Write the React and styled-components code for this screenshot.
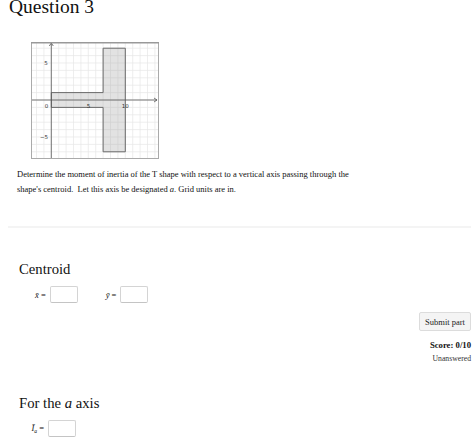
import React from "react";
import styled, { createGlobalStyle } from "styled-components";

const GlobalStyle = createGlobalStyle`
  html, body {
    margin: 0;
    padding: 0;
    background: #fff;
  }
  body {
    font-family: "Liberation Serif", "Times New Roman", serif;
    color: #111;
    overflow: hidden;
  }
`;

//GRAPH SETTINGS
const OX = 20.3;
const OY = 58;
const S = 7.4;
const px = (u) => OX + u * S;
const py = (u) => OY - u * S;

const tShape = [
  [0, 1],
  [7, 1],
  [7, 7],
  [10, 7],
  [10, -7],
  [7, -7],
  [7, -1],
  [0, -1],
];

function Graph() {
  const xs = [];
  for (let k = -2; k <= 14; k++) xs.push(px(k));
  const ys = [];
  for (let k = -7; k <= 7; k++) ys.push(py(k));

  return (
    <svg width="128" height="117" viewBox="0 0 128 117">
      <rect x="0" y="0" width="128" height="117" fill="#fff" />
      {xs.map((x) => (
        <line key={"v" + x} x1={x} y1="0" x2={x} y2="117" stroke="#e6e6e6" strokeWidth="0.7" />
      ))}
      {ys.map((y) => (
        <line key={"h" + y} x1="0" y1={y} x2="128" y2={y} stroke="#e6e6e6" strokeWidth="0.7" />
      ))}
      <polygon
        points={tShape.map(([a, b]) => `${px(a)},${py(b)}`).join(" ")}
        fill="rgba(160,160,160,0.3)"
        stroke="#6a6a6a"
        strokeWidth="1"
      />
      {/* axes */}
      <line x1="0" y1={OY} x2="126" y2={OY} stroke="#555" strokeWidth="0.8" />
      <path d={`M123 ${OY - 2} L126 ${OY} L123 ${OY + 2}`} fill="none" stroke="#555" strokeWidth="0.8" />
      <line x1={OX} y1="117" x2={OX} y2="1" stroke="#555" strokeWidth="0.8" />
      <path d={`M${OX - 2} 4 L${OX} 1 L${OX + 2} 4`} fill="none" stroke="#555" strokeWidth="0.8" />
      {/* tick labels */}
      <g fontFamily="'DejaVu Sans', sans-serif" fontSize="5.5" fill="#333">
        <text x="15" y="23.2" textAnchor="middle">5</text>
        <text x="15.5" y="66" textAnchor="middle">0</text>
        <text x="13" y="96.7" textAnchor="middle">−5</text>
        <text x="57.4" y="66" textAnchor="middle">5</text>
        <text x="94.3" y="66" textAnchor="middle">10</text>
      </g>
      <rect x="0.5" y="0.5" width="127" height="116" fill="none" stroke="#aaa" strokeWidth="1" />
      <line x1="0" y1="0.8" x2="128" y2="0.8" stroke="#999" strokeWidth="1.6" />
    </svg>
  );
}

export default function App() {
  return (
    <>
      <GlobalStyle />
      <Page>
        <Title>Question 3</Title>
        <Figure>
          <Graph />
        </Figure>
        <Prompt>
          Determine the moment of inertia of the T shape with respect to a vertical axis passing through the
          <br />
          shape's centroid.&nbsp; Let this axis be designated <Var>a</Var>. Grid units are in.
        </Prompt>
        <Divider />

        <Part>
          <PartTitle>Centroid</PartTitle>
          <AnswerRow indent={16}>
            <Answer>
              <Label>
                <Var>x̄</Var> =
              </Label>
              <Input />
            </Answer>
            <Answer>
              <Label>
                <Var>ȳ</Var> =
              </Label>
              <Input />
            </Answer>
          </AnswerRow>
          <PartFooter>
            <SubmitButton>Submit part</SubmitButton>
            <Score>Score: 0/10</Score>
            <Status>Unanswered</Status>
          </PartFooter>
        </Part>

        <Part gap={29}>
          <PartTitle>
            For the <Var>a</Var> axis
          </PartTitle>
          <AnswerRow indent={12.5}>
            <Answer>
              <Label>
                <Var>Ī</Var>
                <Sub>
                  <Var>a</Var>
                </Sub>{" "}
                =
              </Label>
              <Input />
            </Answer>
          </AnswerRow>
        </Part>
      </Page>
    </>
  );
}

//STYLED COMPONENTS
const Page = styled.div`
  display: flex;
  flex-direction: column;
  padding: 0 3px 0 8px;
  width: 474px;
  height: 445px;
  box-sizing: border-box;
`;

const Title = styled.h1`
  margin: -2px 0 0 1px;
  font-size: 19.5px;
  line-height: 18px;
  font-weight: normal;
`;

const Figure = styled.div`
  margin: 26px 0 0 23px;
  height: 117px;
  line-height: 0;
`;

const Prompt = styled.p`
  margin: 8px 0 0 9px;
  font-size: 8.5px;
  line-height: 14.5px;
`;

const Var = styled.i`
  font-style: italic;
`;

const Sub = styled.sub`
  font-size: 0.65em;
  vertical-align: -0.3em;
`;

const Divider = styled.div`
  margin-top: 30px;
  height: 2px;
  background: #f4f4f4;
`;

const Part = styled.section`
  display: flex;
  flex-direction: column;
  margin-top: ${(p) => (p.gap ? p.gap : 32)}px;
  padding-left: 11px;
`;

const PartTitle = styled.h2`
  margin: 0;
  font-size: 14.7px;
  line-height: 18px;
  font-weight: normal;
`;

const AnswerRow = styled.div`
  display: flex;
  align-items: center;
  gap: 28px;
  margin-top: 8px;
  padding-left: ${(p) => p.indent}px;
`;

const Answer = styled.div`
  display: flex;
  align-items: center;
  gap: 4px;
`;

const Label = styled.span`
  font-size: 8.5px;
  white-space: nowrap;
`;

const Input = styled.input`
  width: 28px;
  height: 17px;
  box-sizing: border-box;
  border: 1px solid #d4d4d4;
  border-bottom-color: #c4c4c4;
  border-radius: 2px;
  background: #fff;
  padding: 0;
  margin: 0;
`;

const PartFooter = styled.div`
  display: flex;
  flex-direction: column;
  align-items: flex-end;
  margin-top: 9px;
`;

const SubmitButton = styled.button`
  height: 19px;
  width: 52px;
  padding: 0;
  border: 1px solid #dcdcdc;
  border-radius: 2px;
  background: #f4f4f4;
  font-family: "Liberation Serif", "Times New Roman", serif;
  font-size: 8.5px;
  color: #222;
`;

const Score = styled.div`
  margin-top: 8px;
  font-size: 8.7px;
  line-height: 12px;
  font-weight: bold;
`;

const Status = styled.div`
  margin-top: 2px;
  font-size: 7.7px;
  line-height: 12px;
  color: #333;
`;
